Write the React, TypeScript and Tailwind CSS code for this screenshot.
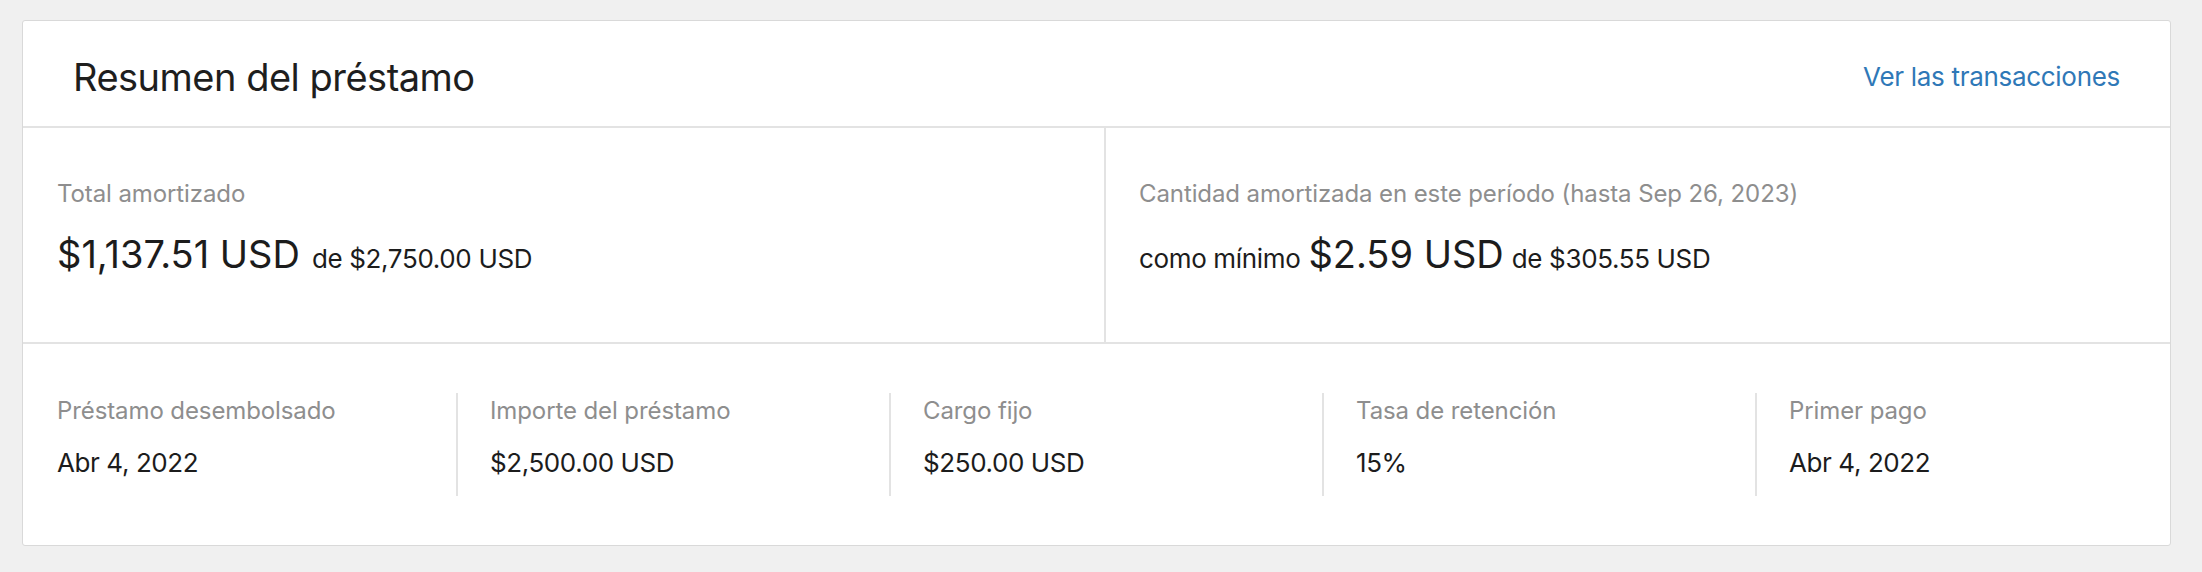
import React from "react";

const font = { fontFamily: "Inter, 'Noto Sans', sans-serif" };

const items = [
  { label: "Préstamo desembolsado", value: "Abr 4, 2022" },
  { label: "Importe del préstamo", value: "$2,500.00 USD" },
  { label: "Cargo fijo", value: "$250.00 USD" },
  { label: "Tasa de retención", value: "15%" },
  { label: "Primer pago", value: "Abr 4, 2022" },
];

export default function App() {
  return (
    <div className="min-h-screen bg-[#f0f0f0] pl-[22px] pr-[31px] pt-[20px] pb-[24px]" style={font}>
      <div className="bg-white border border-[#d9d9d9] rounded-[3px]">
        <div className="flex h-[107px] items-center justify-between border-b-2 border-[#e3e3e3] px-[50px] pt-[6px]">
          <h2 className="text-[38px] leading-none tracking-[-0.5px] text-[#1e1e1e] font-normal">
            Resumen del préstamo
          </h2>
          <a className="text-[26px] leading-none tracking-[-0.3px] text-[#2f78b7]" href="#">
            Ver las transacciones
          </a>
        </div>
        <div className="grid h-[216px] grid-cols-[1081px_1fr] border-b-2 border-[#e3e3e3]">
          <div className="pl-[34px] pt-[51px]">
            <div className="text-[24px] leading-[30px] tracking-[-0.1px] text-[#8e8e8e]">
              Total amortizado
            </div>
            <div className="mt-[26px] flex items-baseline gap-[12px] text-[#1c1c1c]">
              <span className="text-[38px] leading-none">$1,137.51 USD</span>
              <span className="text-[26px] leading-none tracking-[-0.35px]">de $2,750.00 USD</span>
            </div>
          </div>
          <div className="border-l-2 border-[#e3e3e3] pl-[33px] pt-[51px]">
            <div className="text-[24px] leading-[30px] tracking-[-0.1px] text-[#8e8e8e]">
              Cantidad amortizada en este período (hasta Sep 26, 2023)
            </div>
            <div className="mt-[26px] flex items-baseline gap-[8px] text-[#1c1c1c]">
              <span className="text-[26px] leading-none tracking-[-0.35px]">como mínimo</span>
              <span className="text-[38px] leading-none">$2.59 USD</span>
              <span className="text-[26px] leading-none tracking-[-0.35px]">de $305.55 USD</span>
            </div>
          </div>
        </div>
        <div className="grid grid-cols-[399px_433px_433px_433px_1fr] pl-[34px] py-[49px]">
          {items.map((it, i) => (
            <div
              key={i}
              className={
                i > 0
                  ? "h-[103px] pt-[3px] border-l-2 border-[#e3e3e3] pl-[32px]"
                  : "h-[103px] pt-[3px]"
              }
            >
              <div className="text-[24px] leading-[30px] tracking-[-0.1px] text-[#8e8e8e]">{it.label}</div>
              <div className="mt-[22px] text-[26px] leading-[30px] tracking-[-0.4px] text-[#1c1c1c]">
                {it.value}
              </div>
            </div>
          ))}
        </div>
      </div>
    </div>
  );
}
